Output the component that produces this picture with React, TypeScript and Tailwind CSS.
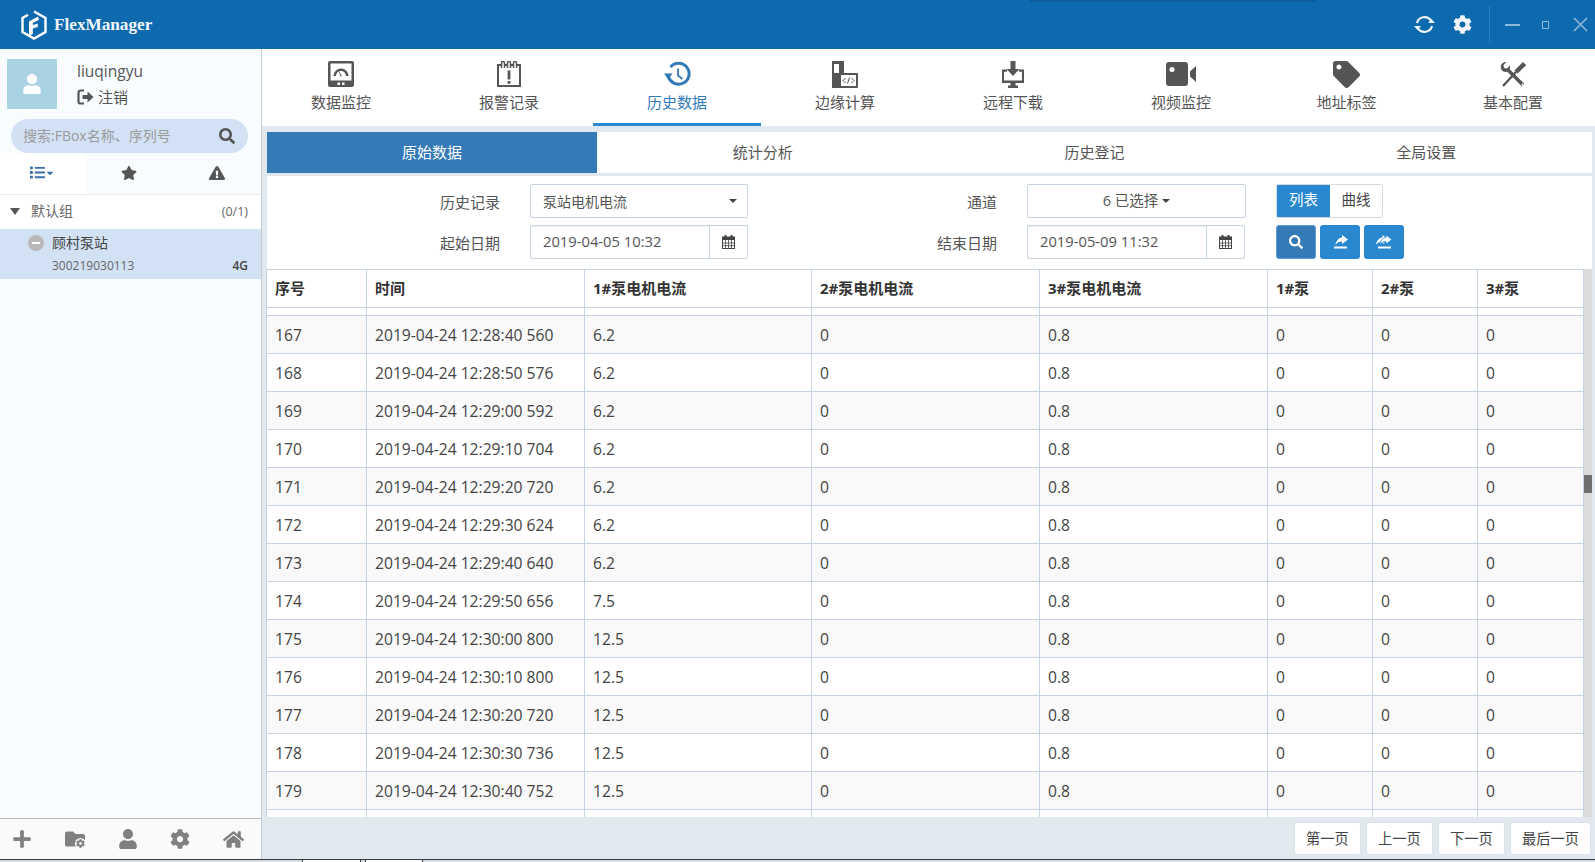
import { FaCog, FaExclamationTriangle, FaHome, FaList, FaPlus, FaSearch, FaStar, FaTag, FaUser, FaFolder, FaCaretDown } from 'react-icons/fa'

const ROWS = [
  ['167', '2019-04-24 12:28:40 560', '6.2'],
  ['168', '2019-04-24 12:28:50 576', '6.2'],
  ['169', '2019-04-24 12:29:00 592', '6.2'],
  ['170', '2019-04-24 12:29:10 704', '6.2'],
  ['171', '2019-04-24 12:29:20 720', '6.2'],
  ['172', '2019-04-24 12:29:30 624', '6.2'],
  ['173', '2019-04-24 12:29:40 640', '6.2'],
  ['174', '2019-04-24 12:29:50 656', '7.5'],
  ['175', '2019-04-24 12:30:00 800', '12.5'],
  ['176', '2019-04-24 12:30:10 800', '12.5'],
  ['177', '2019-04-24 12:30:20 720', '12.5'],
  ['178', '2019-04-24 12:30:30 736', '12.5'],
  ['179', '2019-04-24 12:30:40 752', '12.5'],
]
const HEADERS = ['序号', '时间', '1#泵电机电流', '2#泵电机电流', '3#泵电机电流', '1#泵', '2#泵', '3#泵']
const COL_WIDTHS = [100, 218, 227, 228, 228, 105, 105, 106]

function GaugeIcon() {
  return (
    <svg width="26" height="26" viewBox="0 0 26 26">
      <rect width="26" height="26" rx="2" fill="#555" />
      <rect x="2.5" y="2.5" width="21" height="17" fill="#fff" />
      <path d="M5.500 15a7.500 7.500 0 1 1 15 0h-2.400a5.100 5.100 0 1 0-10.200 0z" fill="#555" />
      <path d="M12.400 15.500l-2-6.500 3.400 6z" fill="#555" />
      <rect x="9.500" y="21.500" width="2.500" height="2.500" fill="#fff" />
      <rect x="14" y="21.500" width="2.500" height="2.500" fill="#fff" />
    </svg>
  )
}

function NoteIcon() {
  return (
    <svg width="24" height="26" viewBox="0 0 24 26">
      <rect x="1" y="4" width="22" height="21" fill="#fff" stroke="#555" strokeWidth="2" />
      <path d="M4.500 7V2a1.500 1.500 0 0 1 3 0v5M10.500 7V2a1.500 1.500 0 0 1 3 0v5M16.500 7V2a1.500 1.500 0 0 1 3 0v5" fill="#fff" stroke="#555" strokeWidth="1.500" />
      <rect x="10.600" y="9.500" width="2.800" height="9" fill="#555" />
      <rect x="10.600" y="20" width="2.800" height="2.800" fill="#555" />
    </svg>
  )
}

function HistoryIcon() {
  return (
    <svg width="27" height="27" viewBox="0 0 27 27">
      <path d="M4.500 15.500A10.500 10.500 0 1 0 6.500 6" fill="none" stroke="#337ab7" strokeWidth="3" />
      <path d="M0 12.500h8.500l-4.300 6z" fill="#337ab7" />
      <path d="M14 7.500v7l4.500 3.500" fill="none" stroke="#337ab7" strokeWidth="1.800" />
    </svg>
  )
}

function EdgeIcon() {
  return (
    <svg width="26" height="27" viewBox="0 0 26 27">
      <rect width="12" height="27" fill="#555" />
      <rect x="2" y="3" width="5" height="9" fill="#fff" />
      <rect x="7" y="12" width="19" height="15" rx="1" fill="#555" />
      <rect x="9" y="14" width="15" height="11" fill="#fff" />
      <path d="M13.500 17l-2.500 2.500 2.500 2.500M19.500 17l2.500 2.500-2.500 2.500M17.500 16.500l-2 6" fill="none" stroke="#555" strokeWidth="1" />
    </svg>
  )
}

function DownloadIcon() {
  return (
    <svg width="22" height="27" viewBox="0 0 22 27">
      <path d="M8.500 0h5v8h4l-6.500 7-6.500-7h4z" fill="#555" />
      <path d="M5 8.500H0V22h8.500v2.500H6V27h10v-2.500h-2.500V22H22V8.500h-5v2.200h3V19.500H2V10.700h3z" fill="#555" />
    </svg>
  )
}

function VideoIcon() {
  return (
    <svg width="30" height="24" viewBox="0 0 30 24">
      <rect width="22" height="24" rx="3" fill="#555" />
      <circle cx="6" cy="7.500" r="2.500" fill="#fff" />
      <path d="M24 9.500L30 4v16l-6-5.500z" fill="#555" />
    </svg>
  )
}

function ToolsIcon() {
  return (
    <svg width="26" height="27" viewBox="0 0 26 27">
      <path d="M7.500 8.500L23 24" fill="none" stroke="#555" strokeWidth="3.500" />
      <circle cx="22.500" cy="23.500" r="1" fill="#fff" />
      <path d="M6.500 1L3.500 4l.5 3 3 .5 3-3c.5 3-1 6-4.500 6.500C2.500 11 0 8 1 4.500 2 2 4 .5 6.500 1z" fill="#555" />
      <path d="M24.500 2.500L16 11" fill="none" stroke="#555" strokeWidth="4.500" />
      <path d="M16 11L3 25" fill="none" stroke="#555" strokeWidth="2.400" />
    </svg>
  )
}

function LogoIcon() {
  return (
    <svg width="28" height="30" viewBox="0 0 28 30">
      <path d="M14 1.500L25.500 8v14L14 28.500 2.500 22V8L8 4.800" fill="none" stroke="#fff" strokeWidth="2.400" />
      <path d="M9 11.500l9-5 1 3.200-6.200 3.300v2l5-1.500v3.500l-5 1.500v5.500l-3.800 2z" fill="#fff" />
    </svg>
  )
}

function RefreshIcon() {
  return (
    <svg width="21" height="21" viewBox="0 0 21 21">
      <path d="M3 9A7.800 7.800 0 0 1 17 6.500" fill="none" stroke="#eef4f9" strokeWidth="2.200" />
      <path d="M18 12A7.800 7.800 0 0 1 4 14.500" fill="none" stroke="#eef4f9" strokeWidth="2.200" />
      <path d="M14 9h7l-3.500-4z" fill="#eef4f9" />
      <path d="M0 12h7l-3.500 4z" fill="#eef4f9" />
    </svg>
  )
}

function LogoutIcon() {
  return (
    <svg width="17" height="16" viewBox="0 0 17 16">
      <path d="M7 1.500H3.500A2 2 0 0 0 1.500 3.500v9a2 2 0 0 0 2 2H7" fill="none" stroke="#555" strokeWidth="2.200" />
      <path d="M5.500 6h5V2.500L16.500 8l-6 5.500V10h-5z" fill="#555" />
    </svg>
  )
}

function CalendarIcon() {
  return (
    <svg width="13" height="14" viewBox="0 0 13 14">
      <rect x="0.500" y="2" width="12" height="11.500" fill="#fff" stroke="#444" />
      <rect x="0.500" y="2" width="12" height="3" fill="#444" />
      <rect x="2.500" y="0" width="2" height="3.500" fill="#444" />
      <rect x="8.500" y="0" width="2" height="3.500" fill="#444" />
      <path d="M0 8h13M0 10.700h13M3.500 5v8M6.500 5v8M9.500 5v8" stroke="#444" strokeWidth="0.800" />
    </svg>
  )
}

const SHARE_PATH = 'M10 0l6 4.500-6 4.500V6.500C7 6.500 5 7.500 3.500 10 4 6 6.500 3 10 2.500z'

function ShareIcon({ double }: { double?: boolean }) {
  return (
    <svg width="17" height="14" viewBox="0 0 17 14">
      {double && <path d={SHARE_PATH} transform="translate(-3.500 0)" fill="#fff" />}
      <path d={SHARE_PATH} fill="#fff" stroke={double ? '#2a88d0' : 'none'} strokeWidth="0.800" />
      <rect x="2" y="11.500" width="13" height="2" fill="#fff" />
    </svg>
  )
}

function FolderGear() {
  return (
    <span className="relative block w-[20px] h-[20px]">
      <FaFolder size={20} color="#808080" />
      <span className="absolute right-[-1px] bottom-[0px] bg-[#fafafa] rounded-full p-[1px]">
        <FaCog size={9} color="#808080" />
      </span>
    </span>
  )
}

const NAV = [
  { label: '数据监控', icon: <GaugeIcon />, width: 'w-[168px]' },
  { label: '报警记录', icon: <NoteIcon />, width: 'w-[168px]' },
  { label: '历史数据', icon: <HistoryIcon />, width: 'w-[168px]', active: true },
  { label: '边缘计算', icon: <EdgeIcon />, width: 'w-[168px]' },
  { label: '远程下载', icon: <DownloadIcon />, width: 'w-[168px]' },
  { label: '视频监控', icon: <VideoIcon />, width: 'w-[168px]' },
  { label: '地址标签', icon: <FaTag size={27} color="#555" />, width: 'w-[163px]' },
  { label: '基本配置', icon: <ToolsIcon />, width: 'w-[170px]' },
]

function Sidebar() {
  return (
    <aside className="w-[262px] shrink-0 flex flex-col bg-[#f9fcff] border-r border-[#c8ccd0]">
      <div className="flex pl-[7px] pt-[10px] h-[70px]">
        <div className="w-[50px] h-[50px] bg-[#a9d2e2] flex items-center justify-center">
          <FaUser size={20} color="#fff" />
        </div>
        <div className="ml-[20px] text-[#555]">
          <div className="text-[15.5px] leading-[24px]">liuqingyu</div>
          <div className="mt-[2px] flex items-center gap-[4px] text-[15px] leading-[24px]">
            <LogoutIcon />注销
          </div>
        </div>
      </div>
      <div className="mx-[11px] h-[34px] w-[237px] rounded-full bg-[#d3e1f5] flex items-center justify-between pl-[12px] pr-[13px]">
        <span className="text-[14px] leading-[20px] mb-[1px] text-[#9a9a9a]">搜索:FBox名称、序列号</span>
        <FaSearch size={16} color="#555" />
      </div>
      <div className="flex h-[42px] pb-[2px] border-b border-[#e8ecf0]">
        <div className="w-[85px] -mb-[2px] pb-[2px] bg-white flex items-center justify-center">
          <FaList size={15} color="#3a6ea8" />
          <FaCaretDown size={10} color="#3a6ea8" />
        </div>
        <div className="w-[88px] flex items-center justify-center"><FaStar size={16} color="#555" /></div>
        <div className="w-[88px] flex items-center justify-center"><FaExclamationTriangle size={16} color="#555" /></div>
      </div>
      <div className="h-[34px] bg-white flex items-center pl-[10px] pr-[13px] text-[#666]">
        <span className="mb-[2px] w-0 h-0 border-x-[5.5px] border-x-transparent border-t-[7px] border-t-[#555]" />
        <span className="ml-[11px] mb-[4px] text-[14px]">默认组</span>
        <span className="ml-auto text-[12.5px]">(0/1)</span>
      </div>
      <div className="h-[50px] bg-[#d3e1f5] pr-[13px]">
        <div className="flex items-center pl-[28px] h-[27px]">
          <span className="w-[16px] h-[16px] rounded-full bg-[#b8b8b8] flex items-center justify-center">
            <span className="w-[8px] h-[2px] bg-white" />
          </span>
          <span className="ml-[8px] text-[14px] text-[#444]">顾村泵站</span>
        </div>
        <div className="mt-[1px] flex items-center justify-between pl-[52px] text-[12px] leading-[18px] text-[#666]">
          <span>300219030113</span>
          <span className="font-semibold text-[#444]">4G</span>
        </div>
      </div>
      <div className="mt-auto h-[41px] bg-[#fafafa] border-t border-[#bbb] flex items-center justify-between pl-[12px] pr-[17px]">
        <FaPlus size={20} color="#808080" />
        <FolderGear />
        <FaUser size={20} color="#808080" />
        <FaCog size={20} color="#808080" />
        <FaHome size={21} color="#808080" />
      </div>
    </aside>
  )
}

function DateField({ value, width }: { value: string; width: string }) {
  return (
    <div className={`${width} h-[34px] flex border border-[#c5d3e2] rounded-[2px] bg-white`}>
      <div className="flex-1 flex items-center pl-[12px] pb-[2px] text-[14.75px] text-[#555] shadow-[inset_0_1px_1px_rgba(0,0,0,0.07)]">{value}</div>
      <div className="w-[38px] border-l border-[#c5d3e2] flex items-center justify-center">
        <CalendarIcon />
      </div>
    </div>
  )
}

function Filters() {
  return (
    <div className="h-[93px] bg-white mr-[3px] ml-[5px] flex pt-[8px] text-[15px] text-[#555] shrink-0">
      <div className="w-[233px] flex flex-col items-end gap-[7px]">
        <div className="h-[34px] pt-[2px] flex items-center">历史记录</div>
        <div className="h-[34px] pt-[2px] flex items-center">起始日期</div>
      </div>
      <div className="ml-[30px] flex flex-col gap-[7px]">
        <div className="w-[218px] h-[34px] border border-[#c5d3e2] flex items-center justify-between pl-[12px] pr-[10px] text-[14px] rounded-[2px]">
          泵站电机电流
          <span className="w-0 h-0 border-x-[4px] border-x-transparent border-t-[4px] border-t-[#444]" />
        </div>
        <DateField value="2019-04-05 10:32" width="w-[218px]" />
      </div>
      <div className="w-[249px] flex flex-col items-end gap-[7px]">
        <div className="h-[34px] pt-[2px] flex items-center">通道</div>
        <div className="h-[34px] pt-[2px] flex items-center">结束日期</div>
      </div>
      <div className="ml-[30px] flex flex-col gap-[7px]">
        <div className="w-[219px] h-[34px] border border-[#c5d3e2] flex items-center justify-center gap-[4px] text-[14.5px] rounded-[2px]">
          6 已选择
          <span className="w-0 h-0 border-x-[4px] border-x-transparent border-t-[4px] border-t-[#444]" />
        </div>
        <DateField value="2019-05-09 11:32" width="w-[218px]" />
      </div>
      <div className="ml-[30px] flex flex-col gap-[7px]">
        <div className="w-[107px] h-[34px] flex border border-[#d4d9de] rounded-[3px] text-[14.5px]">
          <div className="w-[53px] pb-[2px] bg-[#2a88d0] text-white flex items-center justify-center">列表</div>
          <div className="flex-1 pb-[2px] flex items-center justify-center text-[#444]">曲线</div>
        </div>
        <div className="flex gap-[4px]">
          <div className="w-[40px] h-[34px] rounded-[3px] bg-[#337ab7] border border-[#5b9de0] flex items-center justify-center">
            <FaSearch size={14} color="#fff" />
          </div>
          <div className="w-[40px] h-[34px] rounded-[3px] bg-[#2a88d0] flex items-center justify-center"><ShareIcon /></div>
          <div className="w-[40px] h-[34px] rounded-[3px] bg-[#2a88d0] flex items-center justify-center"><ShareIcon double /></div>
        </div>
      </div>
    </div>
  )
}

function DataTable() {
  const cell = 'border border-[#c5d3e2] px-[8px] pt-[2px] text-[15.65px] text-[#444] font-normal text-left'
  return (
    <div className="h-[548px] shrink-0 ml-[4px] mr-[3px] flex bg-white overflow-hidden">
      <table className="w-[1317px] table-fixed border-collapse self-start">
        <colgroup>
          {COL_WIDTHS.map((w, i) => (
            <col key={i} width={w} />
          ))}
        </colgroup>
        <thead>
          <tr className="h-[38px]">
            {HEADERS.map(h => (
              <th key={h} className="border border-[#c5d3e2] px-[8px] text-[15px] font-bold text-[#333] text-left">{h}</th>
            ))}
          </tr>
        </thead>
        <tbody>
          <tr className="h-[8px]">
            {HEADERS.map(h => <td key={h} className="border border-[#c5d3e2] p-0" />)}
          </tr>
          {ROWS.map((r, i) => (
            <tr key={r[0]} className={`h-[38px] ${i % 2 === 0 ? 'bg-[#f9f9f9]' : 'bg-white'}`}>
              <td className={cell}>{r[0]}</td>
              <td className={cell}>{r[1]}</td>
              <td className={cell}>{r[2]}</td>
              <td className={cell}>0</td>
              <td className={cell}>0.8</td>
              <td className={cell}>0</td>
              <td className={cell}>0</td>
              <td className={cell}>0</td>
            </tr>
          ))}
          <tr className="h-[8px]">
            {HEADERS.map(h => <td key={h} className="border border-[#c5d3e2] p-0" />)}
          </tr>
        </tbody>
      </table>
      <div className="w-[8px] bg-[#dcdcdc]">
        <div className="mt-[206px] h-[18px] bg-[#6f6f6f]" />
      </div>
    </div>
  )
}

export default function App() {
  return (
    <div className="w-[1595px] h-[862px] flex flex-col overflow-hidden relative font-['Open_Sans','Noto_Sans_CJK_SC',sans-serif]">
      <header className="h-[49px] shrink-0 bg-[#0d6aaf] flex items-center">
        <div className="ml-[20px] flex items-center gap-[6px]">
          <LogoIcon />
          <span className="font-['Liberation_Serif',serif] font-bold text-[17.2px] text-[#f2f6fa]">FlexManager</span>
        </div>
        <div className="ml-auto flex items-center">
          <RefreshIcon />
          <span className="ml-[18px]"><FaCog size={19} color="#eef4f9" /></span>
          <span className="ml-[17px] w-px h-[37px] bg-[#2f7fbb]" />
          <span className="ml-[15px] w-[15px] h-[2px] bg-[#8db8da]" />
          <span className="ml-[22px] w-[7px] h-[8px] border border-[#8db8da]" />
          <svg className="ml-[24px] mr-[7px]" width="15" height="15" viewBox="0 0 15 15">
            <path d="M1 1l13 13M14 1L1 14" stroke="#8db8da" strokeWidth="1.6" />
          </svg>
        </div>
      </header>
      <div className="absolute top-0 left-[1030px] w-[285px] h-[2px] bg-[#0b5c99]" />

      <div className="flex-1 flex min-h-0">
        <Sidebar />
        <main className="flex-1 min-w-0 overflow-hidden bg-[#e1e8ef] flex flex-col">
          <nav className="h-[77px] shrink-0 bg-white flex -ml-[5px]">
            {NAV.map(n => (
              <div key={n.label} className={`${n.width} shrink-0 flex flex-col items-center ${n.active ? 'border-b-[3px] border-[#2a88d0] text-[#337ab7]' : 'text-[#555]'}`}>
                <div className="h-[28px] mt-[11px] flex items-center justify-center">{n.icon}</div>
                <div className="text-[15px] leading-[20px] mt-[4px]">{n.label}</div>
              </div>
            ))}
          </nav>
          <div className="h-[41px] mt-[6px] ml-[5px] mr-[3px] bg-white grid grid-cols-[330px_1fr_1fr_1fr] text-[15px] text-[#555] shrink-0">
            <div className="bg-[#337ab7] text-white flex items-center justify-center">原始数据</div>
            <div className="flex items-center justify-center">统计分析</div>
            <div className="flex items-center justify-center">历史登记</div>
            <div className="flex items-center justify-center">全局设置</div>
          </div>
          <div className="h-[3px] shrink-0" />
          <Filters />
          <DataTable />
          <div className="flex-1 flex items-center justify-end pr-[4px] gap-[5px] text-[14.25px] text-[#444]">
            <div className="w-[67px] h-[33px] pt-[2px] bg-white border border-[#dde2e8] rounded-[3px] flex items-center justify-center">第一页</div>
            <div className="w-[67px] h-[33px] pt-[2px] bg-white border border-[#dde2e8] rounded-[3px] flex items-center justify-center">上一页</div>
            <div className="w-[67px] h-[33px] pt-[2px] bg-white border border-[#dde2e8] rounded-[3px] flex items-center justify-center">下一页</div>
            <div className="w-[81px] h-[33px] pt-[2px] bg-white border border-[#dde2e8] rounded-[3px] flex items-center justify-center">最后一页</div>
          </div>
        </main>
      </div>

      <div className="h-[3px] shrink-0 bg-[#d7dde3] border-t border-[#2e3b47] flex">
        <span className="ml-[302px] w-[59px] bg-white border-x border-[#2e3b47]" />
        <span className="ml-[4px] w-[58px] bg-white border-x border-[#2e3b47]" />
      </div>
    </div>
  )
}
